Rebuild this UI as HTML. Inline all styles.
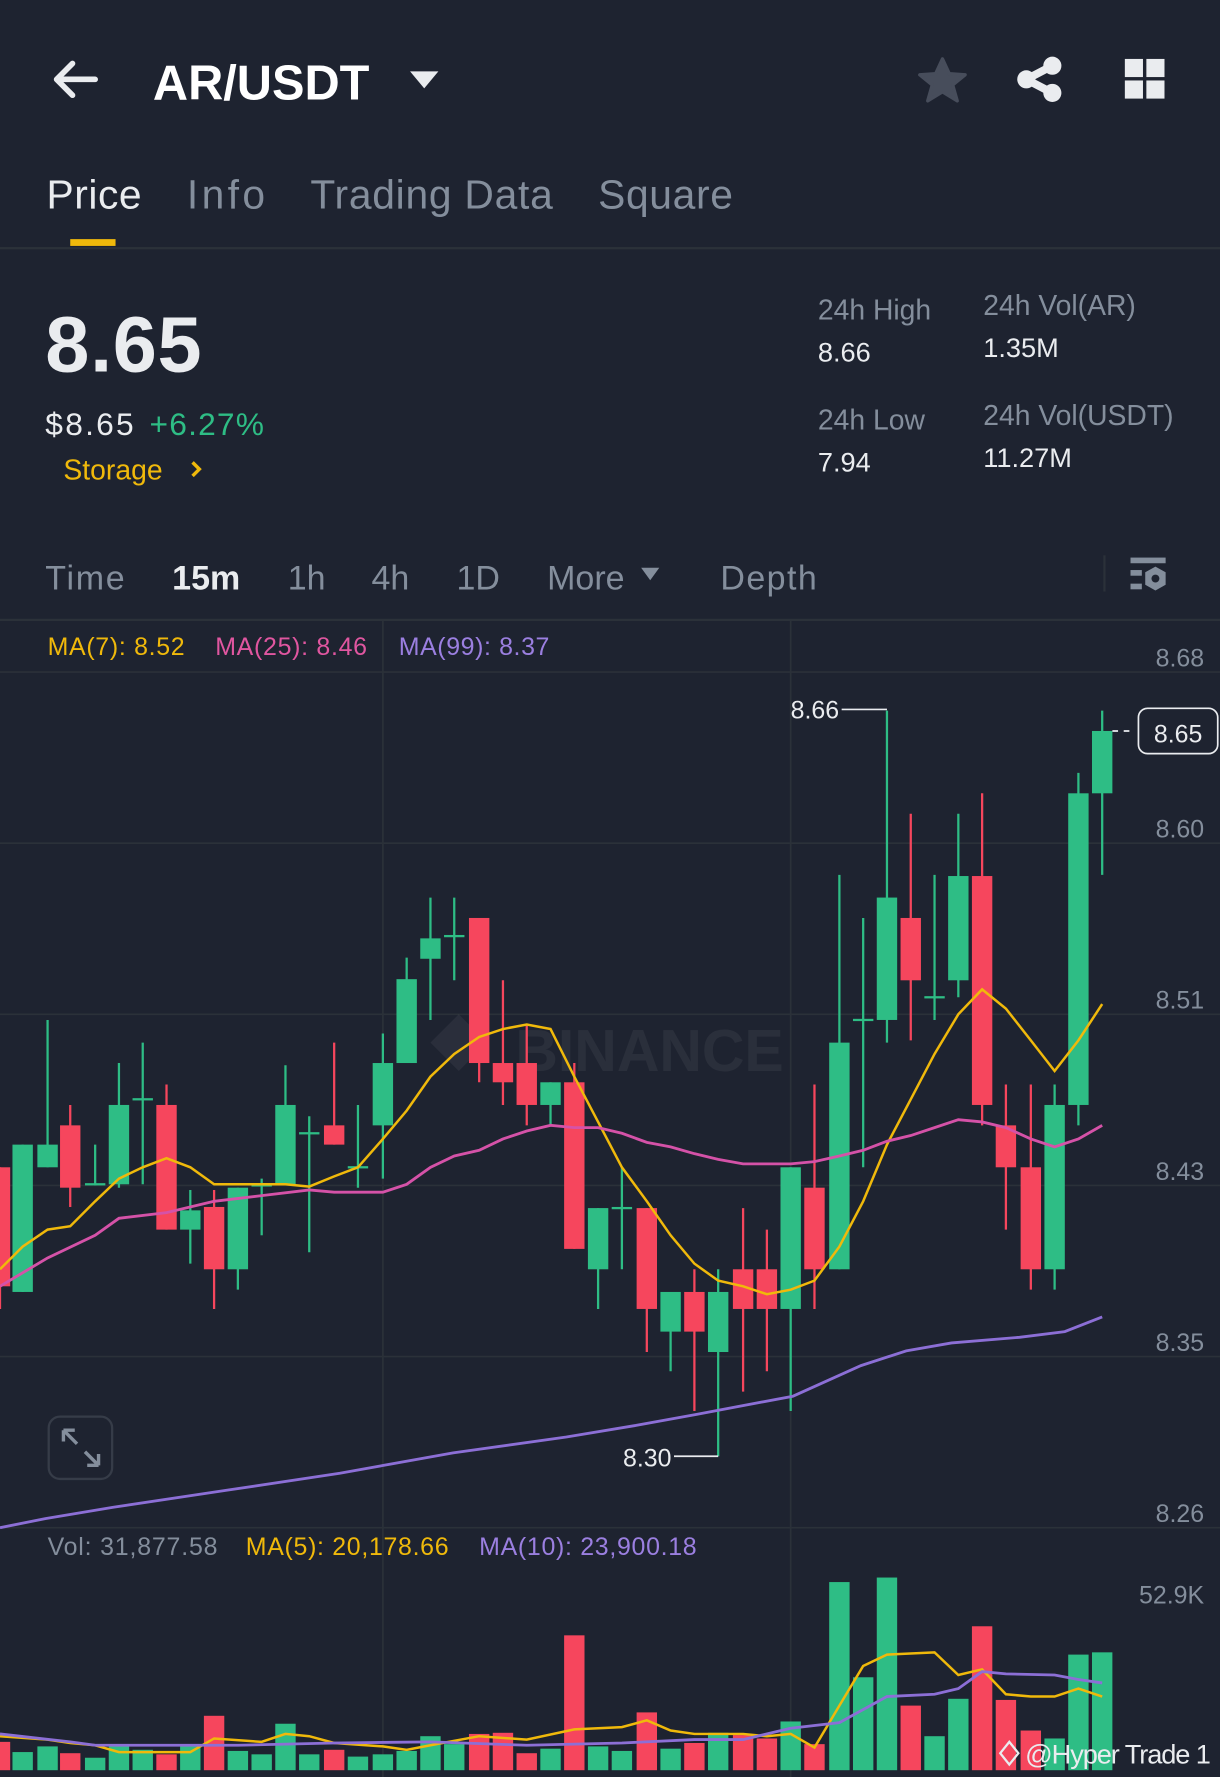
<!DOCTYPE html>
<html><head><meta charset="utf-8"><style>
html,body{margin:0;padding:0;background:#1e2330;}
svg{display:block;}
text{font-family:"Liberation Sans",sans-serif;}
</style></head><body>
<svg width="1220" height="1777" viewBox="0 0 1077 1568" preserveAspectRatio="none" xmlns="http://www.w3.org/2000/svg">
<rect width="1077" height="1568" fill="#1e2330"/>
<!-- header -->
<path d="M84 70 H50 M64 56 L50 70 L64 84" stroke="#eaecef" stroke-width="5" fill="none" stroke-linecap="round" stroke-linejoin="round"/>
<text x="135" y="88" font-size="43" font-weight="bold" fill="#fff">AR/USDT</text>
<path d="M362 63 H387 L374.5 78 Z" fill="#eaecef"/>
<path d="M832 52 L838 65 L852 66 L841 75 L845 89 L832 81 L819 89 L823 75 L812 66 L826 65 Z" fill="#474d5b" stroke="#474d5b" stroke-width="3" stroke-linejoin="round"/>
<g fill="#eaecef"><circle cx="929" cy="58" r="8"/><circle cx="929" cy="82" r="8"/><circle cx="906" cy="70" r="8"/></g>
<path d="M906 70 L929 58 M906 70 L929 82" stroke="#eaecef" stroke-width="7"/>
<g fill="#eaecef"><rect x="993" y="52" width="16" height="16"/><rect x="1012" y="52" width="16" height="16"/><rect x="993" y="71" width="16" height="16"/><rect x="1012" y="71" width="16" height="16"/></g>
<!-- tabs -->
<g font-size="36">
<text x="41" y="184" fill="#eaecef" textLength="84">Price</text>
<text x="165" y="184" fill="#848e9c" textLength="69">Info</text>
<text x="274" y="184" fill="#848e9c" textLength="214">Trading Data</text>
<text x="528" y="184" fill="#848e9c" textLength="119">Square</text>
</g>
<rect x="62" y="211" width="40" height="6" fill="#f0b90b"/>
<rect x="0" y="218" width="1077" height="2" fill="#2b3139"/>
<!-- price -->
<text x="40" y="328" font-size="70" font-weight="bold" fill="#eaecef" textLength="138">8.65</text>
<text x="40" y="384" font-size="28" fill="#eaecef" textLength="78">$8.65</text>
<text x="132" y="384" font-size="28" fill="#2ebd85" textLength="101">+6.27%</text>
<text x="56" y="423" font-size="25" fill="#f0b90b">Storage</text>
<path d="M170 408 L176 414 L170 420" stroke="#f0b90b" stroke-width="3" fill="none"/>
<g font-size="25">
<text x="722" y="282" fill="#848e9c">24h High</text>
<text x="722" y="319" fill="#eaecef" font-size="24">8.66</text>
<text x="868" y="278" fill="#848e9c">24h Vol(AR)</text>
<text x="868" y="315" fill="#eaecef" font-size="24">1.35M</text>
<text x="722" y="379" fill="#848e9c">24h Low</text>
<text x="722" y="416" fill="#eaecef" font-size="24">7.94</text>
<text x="868" y="375" fill="#848e9c">24h Vol(USDT)</text>
<text x="868" y="412" fill="#eaecef" font-size="24">11.27M</text>
</g>
<!-- intervals -->
<g font-size="30" fill="#848e9c">
<text x="40" y="520" textLength="70">Time</text>
<text x="152" y="520" fill="#eaecef" font-weight="bold">15m</text>
<text x="254" y="520">1h</text>
<text x="328" y="520">4h</text>
<text x="403" y="520">1D</text>
<text x="483" y="520">More</text>
<text x="636" y="520" textLength="85">Depth</text>
</g>
<path d="M566 501 H582 L574 512 Z" fill="#848e9c"/>
<rect x="974" y="490" width="2" height="32" fill="#2b3139"/>
<g fill="#848e9c"><rect x="998" y="492" width="31" height="5"/><rect x="998" y="503" width="10" height="5"/><rect x="998" y="515" width="10" height="5"/>
<path d="M1020 500 L1029 505 L1029 516 L1020 521 L1011 516 L1011 505 Z"/></g>
<circle cx="1020" cy="510.5" r="3.5" fill="#1e2330"/>
<rect x="0" y="546" width="1077" height="2" fill="#2b3139"/>
<!-- grid -->
<g stroke="#2b3139" stroke-width="1.5">
<line x1="0" y1="593" x2="1077" y2="593"/><line x1="0" y1="744" x2="1077" y2="744"/><line x1="0" y1="895" x2="1077" y2="895"/><line x1="0" y1="1046" x2="1077" y2="1046"/><line x1="0" y1="1197" x2="1077" y2="1197"/><line x1="0" y1="1348" x2="1077" y2="1348"/>
<line x1="338" y1="548" x2="338" y2="1568"/><line x1="698" y1="548" x2="698" y2="1568"/>
</g>
<g font-size="22" fill="#848e9c" text-anchor="end">
<text x="1063" y="588">8.68</text><text x="1063" y="739">8.60</text><text x="1063" y="890">8.51</text><text x="1063" y="1041">8.43</text><text x="1063" y="1192">8.35</text><text x="1063" y="1343">8.26</text>
<text x="1063" y="1415">52.9K</text>
</g>
<g font-size="22">
<text x="42" y="578" fill="#f0b90b" textLength="121">MA(7): 8.52</text>
<text x="190" y="578" fill="#e056a0" textLength="134">MA(25): 8.46</text>
<text x="352" y="578" fill="#9b7fe0" textLength="133">MA(99): 8.37</text>
</g>
<!-- watermark -->
<g opacity="0.06" fill="#eaecef">
<path d="M405 895 L430 920 L405 945 L380 920 Z"/>
<text x="455" y="945" font-size="52" font-weight="bold">BINANCE</text>
</g>
<!-- candles -->
<g stroke-width="2">
<g fill="#f6465d" stroke="#f6465d">
<line x1="0" y1="1030" x2="0" y2="1155"/><rect x="-9" y="1030" width="18" height="105" stroke="none"/>
<line x1="62" y1="975" x2="62" y2="1065"/><rect x="53" y="993" width="18" height="55" stroke="none"/>
<line x1="147" y1="957" x2="147" y2="1085"/><rect x="138" y="975" width="18" height="110" stroke="none"/>
<line x1="189" y1="1050" x2="189" y2="1155"/><rect x="180" y="1065" width="18" height="55" stroke="none"/>
<line x1="295" y1="920" x2="295" y2="1010"/><rect x="286" y="993" width="18" height="17" stroke="none"/>
<line x1="423" y1="810" x2="423" y2="955"/><rect x="414" y="810" width="18" height="128" stroke="none"/>
<line x1="444" y1="865" x2="444" y2="975"/><rect x="435" y="938" width="18" height="17" stroke="none"/>
<line x1="465" y1="905" x2="465" y2="993"/><rect x="456" y="938" width="18" height="37" stroke="none"/>
<line x1="507" y1="938" x2="507" y2="1102"/><rect x="498" y="955" width="18" height="147" stroke="none"/>
<line x1="571" y1="1066" x2="571" y2="1193"/><rect x="562" y="1066" width="18" height="89" stroke="none"/>
<line x1="613" y1="1120" x2="613" y2="1245"/><rect x="604" y="1140" width="18" height="35" stroke="none"/>
<line x1="656" y1="1066" x2="656" y2="1228"/><rect x="647" y="1120" width="18" height="35" stroke="none"/>
<line x1="677" y1="1085" x2="677" y2="1210"/><rect x="668" y="1120" width="18" height="35" stroke="none"/>
<line x1="719" y1="957" x2="719" y2="1155"/><rect x="710" y="1048" width="18" height="72" stroke="none"/>
<line x1="804" y1="718" x2="804" y2="918"/><rect x="795" y="810" width="18" height="55" stroke="none"/>
<line x1="867" y1="700" x2="867" y2="993"/><rect x="858" y="773" width="18" height="202" stroke="none"/>
<line x1="888" y1="957" x2="888" y2="1085"/><rect x="879" y="993" width="18" height="37" stroke="none"/>
<line x1="910" y1="957" x2="910" y2="1138"/><rect x="901" y="1030" width="18" height="90" stroke="none"/>
</g>
<g fill="#2ebd85" stroke="#2ebd85">
<line x1="20" y1="1010" x2="20" y2="1140"/><rect x="11" y="1010" width="18" height="130" stroke="none"/>
<line x1="42" y1="900" x2="42" y2="1030"/><rect x="33" y="1010" width="18" height="20" stroke="none"/>
<line x1="84" y1="1010" x2="84" y2="1046"/><rect x="75" y="1044" width="18" height="2" stroke="none"/>
<line x1="105" y1="938" x2="105" y2="1048"/><rect x="96" y="975" width="18" height="70" stroke="none"/>
<line x1="126" y1="920" x2="126" y2="1045"/><rect x="117" y="969" width="18" height="2" stroke="none"/>
<line x1="168" y1="1050" x2="168" y2="1115"/><rect x="159" y="1068" width="18" height="17" stroke="none"/>
<line x1="210" y1="1048" x2="210" y2="1138"/><rect x="201" y="1048" width="18" height="72" stroke="none"/>
<line x1="231" y1="1040" x2="231" y2="1090"/><rect x="222" y="1045" width="18" height="2" stroke="none"/>
<line x1="252" y1="940" x2="252" y2="1045"/><rect x="243" y="975" width="18" height="70" stroke="none"/>
<line x1="273" y1="985" x2="273" y2="1105"/><rect x="264" y="999" width="18" height="2" stroke="none"/>
<line x1="316" y1="975" x2="316" y2="1048"/><rect x="307" y="1029" width="18" height="2" stroke="none"/>
<line x1="338" y1="912" x2="338" y2="1040"/><rect x="329" y="938" width="18" height="55" stroke="none"/>
<line x1="359" y1="845" x2="359" y2="938"/><rect x="350" y="864" width="18" height="74" stroke="none"/>
<line x1="380" y1="792" x2="380" y2="900"/><rect x="371" y="828" width="18" height="18" stroke="none"/>
<line x1="401" y1="792" x2="401" y2="865"/><rect x="392" y="825" width="18" height="2" stroke="none"/>
<line x1="486" y1="955" x2="486" y2="993"/><rect x="477" y="955" width="18" height="20" stroke="none"/>
<line x1="528" y1="1066" x2="528" y2="1155"/><rect x="519" y="1066" width="18" height="54" stroke="none"/>
<line x1="549" y1="1030" x2="549" y2="1120"/><rect x="540" y="1065" width="18" height="2" stroke="none"/>
<line x1="592" y1="1140" x2="592" y2="1210"/><rect x="583" y="1140" width="18" height="35" stroke="none"/>
<line x1="634" y1="1120" x2="634" y2="1285"/><rect x="625" y="1140" width="18" height="53" stroke="none"/>
<line x1="698" y1="1030" x2="698" y2="1245"/><rect x="689" y="1030" width="18" height="125" stroke="none"/>
<line x1="741" y1="772" x2="741" y2="1120"/><rect x="732" y="920" width="18" height="200" stroke="none"/>
<line x1="762" y1="810" x2="762" y2="1030"/><rect x="753" y="899" width="18" height="2" stroke="none"/>
<line x1="783" y1="627" x2="783" y2="920"/><rect x="774" y="792" width="18" height="108" stroke="none"/>
<line x1="825" y1="772" x2="825" y2="900"/><rect x="816" y="879" width="18" height="2" stroke="none"/>
<line x1="846" y1="718" x2="846" y2="880"/><rect x="837" y="773" width="18" height="92" stroke="none"/>
<line x1="931" y1="957" x2="931" y2="1138"/><rect x="922" y="975" width="18" height="145" stroke="none"/>
<line x1="952" y1="682" x2="952" y2="993"/><rect x="943" y="700" width="18" height="275" stroke="none"/>
<line x1="973" y1="627" x2="973" y2="772"/><rect x="964" y="645" width="18" height="55" stroke="none"/>
</g>
</g>
<!-- MA lines -->
<polyline fill="none" stroke="#f0b90b" stroke-width="2.2" points="0,1120 20,1100 42,1085 62,1082 84,1060 105,1040 126,1030 147,1022 168,1030 189,1045 210,1045 231,1045 252,1045 273,1047 295,1038 316,1030 338,1005 359,980 380,950 401,930 423,915 444,908 465,904 486,908 507,950 528,990 549,1030 571,1060 592,1090 613,1115 634,1130 656,1135 677,1142 698,1138 719,1130 741,1100 762,1060 783,1010 804,970 825,930 846,895 867,873 888,890 910,918 931,945 952,918 973,886"/>
<polyline fill="none" stroke="#d552a8" stroke-width="2.5" points="0,1135 42,1110 84,1090 105,1075 147,1070 189,1060 231,1055 273,1050 295,1052 338,1052 359,1045 380,1030 401,1020 423,1015 444,1005 465,998 486,993 507,995 528,995 549,1000 571,1008 592,1012 613,1018 634,1023 656,1027 677,1027 698,1027 719,1025 741,1020 762,1015 783,1007 804,1002 825,995 846,988 867,990 888,995 910,1005 931,1012 952,1005 973,993"/>
<polyline fill="none" stroke="#8c6fd6" stroke-width="2.5" points="0,1348 40,1340 100,1330 200,1315 300,1300 400,1282 500,1268 560,1258 615,1248 700,1232 760,1205 800,1192 840,1185 900,1180 940,1175 973,1162"/>
<!-- markers -->
<text x="698" y="634" font-size="22" fill="#eaecef">8.66</text>
<path d="M743 626 H783" stroke="#eaecef" stroke-width="1.5"/>
<text x="550" y="1294" font-size="22" fill="#eaecef">8.30</text>
<path d="M595 1285 H634" stroke="#eaecef" stroke-width="1.5"/>
<path d="M982 645 H1002" stroke="#eaecef" stroke-width="1.5" stroke-dasharray="5,5"/>
<rect x="1005" y="625" width="70" height="40" rx="8" fill="#1e2330" stroke="#eaecef" stroke-width="1.5"/>
<text x="1040" y="655" font-size="22" fill="#eaecef" text-anchor="middle">8.65</text>
<!-- expand -->
<rect x="43" y="1250" width="56" height="55" rx="10" fill="none" stroke="#363c48" stroke-width="2"/>
<path d="M56 1262 L68 1274 M56 1262 V1272 M56 1262 H66 M87 1293 L75 1281 M87 1293 V1283 M87 1293 H77" stroke="#848e9c" stroke-width="3" fill="none"/>
<!-- vol legend -->
<g font-size="22">
<text x="42" y="1372" fill="#848e9c" textLength="150">Vol: 31,877.58</text>
<text x="217" y="1372" fill="#f0b90b" textLength="179">MA(5): 20,178.66</text>
<text x="423" y="1372" fill="#9b7fe0" textLength="192">MA(10): 23,900.18</text>
</g>
<!-- volume bars -->
<g fill="#2ebd85">
<rect x="11" y="1546" width="18" height="16"/><rect x="33" y="1541" width="18" height="21"/><rect x="75" y="1551" width="18" height="11"/><rect x="96" y="1540" width="18" height="22"/><rect x="117" y="1544" width="18" height="18"/><rect x="159" y="1541" width="18" height="21"/><rect x="201" y="1545" width="18" height="17"/><rect x="222" y="1548" width="18" height="14"/><rect x="243" y="1521" width="18" height="41"/><rect x="264" y="1548" width="18" height="14"/><rect x="307" y="1550" width="18" height="12"/><rect x="329" y="1548" width="18" height="14"/><rect x="350" y="1545" width="18" height="17"/><rect x="371" y="1532" width="18" height="30"/><rect x="392" y="1539" width="18" height="23"/><rect x="477" y="1543" width="18" height="19"/><rect x="519" y="1541" width="18" height="21"/><rect x="540" y="1545" width="18" height="17"/><rect x="583" y="1543" width="18" height="19"/><rect x="625" y="1529" width="18" height="33"/><rect x="689" y="1519" width="18" height="43"/><rect x="732" y="1396" width="18" height="166"/><rect x="753" y="1480" width="18" height="82"/><rect x="774" y="1392" width="18" height="170"/><rect x="816" y="1532" width="18" height="30"/><rect x="837" y="1499" width="18" height="63"/><rect x="922" y="1534" width="18" height="28"/><rect x="943" y="1460" width="18" height="102"/><rect x="964" y="1458" width="18" height="104"/>
</g>
<g fill="#f6465d">
<rect x="-9" y="1537" width="18" height="25"/><rect x="53" y="1547" width="18" height="15"/><rect x="138" y="1548" width="18" height="14"/><rect x="180" y="1514" width="18" height="48"/><rect x="286" y="1544" width="18" height="18"/><rect x="414" y="1530" width="18" height="32"/><rect x="435" y="1529" width="18" height="33"/><rect x="456" y="1547" width="18" height="15"/><rect x="498" y="1443" width="18" height="119"/><rect x="562" y="1511" width="18" height="51"/><rect x="604" y="1538" width="18" height="24"/><rect x="647" y="1531" width="18" height="31"/><rect x="668" y="1534" width="18" height="28"/><rect x="710" y="1539" width="18" height="23"/><rect x="795" y="1505" width="18" height="57"/><rect x="858" y="1435" width="18" height="127"/><rect x="879" y="1500" width="18" height="62"/><rect x="901" y="1527" width="18" height="35"/>
</g>
<polyline fill="none" stroke="#f0b90b" stroke-width="2.2" points="0,1532 42,1535 62,1538 84,1540 105,1546 147,1546 168,1546 189,1534 231,1537 252,1530 273,1532 295,1538 338,1541 359,1544 380,1540 423,1532 465,1535 507,1526 549,1524 571,1518 592,1527 613,1530 656,1530 677,1532 698,1530 719,1542 741,1505 762,1470 783,1460 825,1458 846,1478 867,1473 888,1495 910,1497 931,1497 952,1490 973,1497"/>
<polyline fill="none" stroke="#8c6fd6" stroke-width="2.5" points="0,1530 62,1537 84,1540 147,1540 210,1540 295,1538 380,1537 465,1540 549,1538 613,1535 656,1535 698,1525 741,1520 783,1497 825,1495 846,1490 867,1475 888,1477 931,1478 952,1482 973,1485"/>
<!-- footer watermark -->
<g fill="#eaecef">
<path d="M891 1537 L899 1547 L891 1557 L883 1547 Z" fill="none" stroke="#eaecef" stroke-width="2"/>
<text x="905" y="1556" font-size="24" textLength="164">@Hyper Trade 1</text>
</g>
</svg>
</body></html>
